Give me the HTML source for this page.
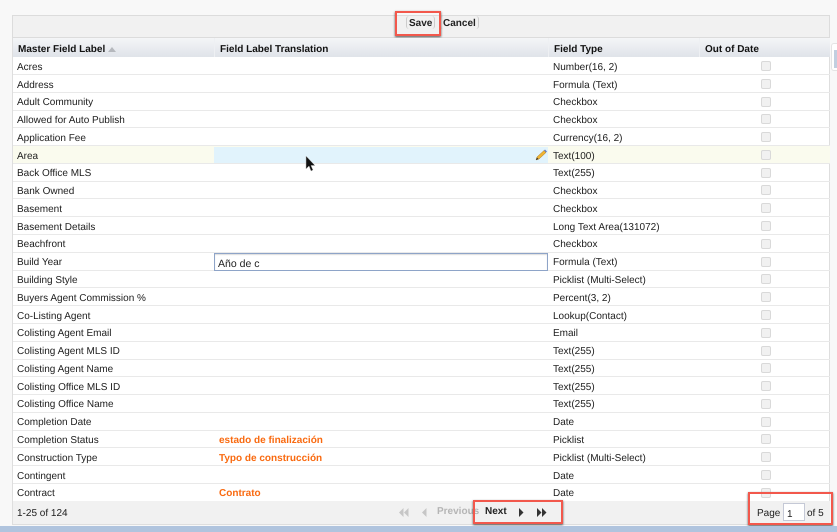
<!DOCTYPE html>
<html><head><meta charset="utf-8"><style>
html,body{margin:0;padding:0}
body{width:837px;height:532px;overflow:hidden;background:#f8f8f8;position:relative;font-family:"Liberation Sans",sans-serif;font-size:10px;color:#1c1c1c;text-rendering:geometricPrecision}
#wrap{position:absolute;left:0;top:0;width:837px;height:532px;filter:blur(.3px)}
#box{position:absolute;left:12px;top:15px;width:818px;height:510px;background:#fff;border:1px solid #dedede;box-sizing:border-box}
#top{position:absolute;left:12px;top:15px;width:818px;height:23px;background:#f1f1f1;border:1px solid #dcdcdc;box-sizing:border-box}
#head{position:absolute;left:13px;top:38px;width:817px;height:19px;background:linear-gradient(#f4f5f7,#dfe3e9)}
#head b{position:absolute;top:1px;line-height:21px;font-size:10px;color:#111;white-space:nowrap}
#head i{position:absolute;top:0;width:1px;height:19px;background:#eef0f3}
.r{position:absolute;left:13px;width:817px;height:18px;border-bottom:1px solid #e9e9e9;box-sizing:border-box;line-height:20px;white-space:nowrap}
.r span{position:absolute;left:4px;top:0}
.r em{position:absolute;left:206px;top:0;font-style:normal;font-weight:bold;color:#f96a10}
.r u{position:absolute;left:540px;top:0;text-decoration:none}
.d span,.d em,.d u{top:1px}
.r s{position:absolute;left:748px;top:4px;width:10px;height:10px;background:#f1f1f1;border:1px solid #d9d9d9;border-radius:2px;box-sizing:border-box}
#foot{position:absolute;left:13px;top:501px;width:817px;height:23px;background:#f1f1f1}
#band{position:absolute;left:0;top:526px;width:837px;height:6px;background:#b0c4de}
.red{position:absolute;border:2px solid #f2584c;box-sizing:border-box;box-shadow:0 1px 2px #555}
.btn{position:absolute;top:16px;height:13px;line-height:15px;font-weight:bold;border:1px solid #ccc;border-top:0;border-bottom:0;border-radius:3px;padding:0 2px;color:#222}
.t{position:absolute;white-space:nowrap}
</style></head><body><div id="wrap">
<div id="box"></div>
<div id="top"></div>
<div class="btn" style="left:406px">Save</div>
<div class="btn" style="left:440px">Cancel</div>
<div class="red" style="left:395px;top:11px;width:46px;height:25px"></div>
<div id="head">
<b style="left:5px">Master Field Label</b>
<svg style="position:absolute;left:95px;top:9px" width="8" height="5"><path d="M0 5L4 0L8 5Z" fill="#b5b8bd"/></svg>
<i style="left:201px"></i><b style="left:207px">Field Label Translation</b>
<i style="left:535px"></i><b style="left:541px">Field Type</b>
<i style="left:686px"></i><b style="left:692px">Out of Date</b>
</div>
<div class="r d" style="top:57px"><span>Acres</span><u>Number(16, 2)</u><s></s></div>
<div class="r d" style="top:75px"><span>Address</span><u>Formula (Text)</u><s></s></div>
<div class="r" style="top:93px"><span>Adult Community</span><u>Checkbox</u><s></s></div>
<div class="r d" style="top:110px"><span>Allowed for Auto Publish</span><u>Checkbox</u><s></s></div>
<div class="r d" style="top:128px"><span>Application Fee</span><u>Currency(16, 2)</u><s></s></div>
<div class="r d" style="top:146px;background:#fafbee"><div style="position:absolute;left:201px;top:1px;width:334px;height:16px;background:#e1f3fc"></div><span>Area</span><u>Text(100)</u><s></s></div>
<div class="r" style="top:164px"><span>Back Office MLS</span><u>Text(255)</u><s></s></div>
<div class="r d" style="top:181px"><span>Bank Owned</span><u>Checkbox</u><s></s></div>
<div class="r d" style="top:199px"><span>Basement</span><u>Checkbox</u><s></s></div>
<div class="r d" style="top:217px"><span>Basement Details</span><u>Long Text Area(131072)</u><s></s></div>
<div class="r" style="top:235px"><span>Beachfront</span><u>Checkbox</u><s></s></div>
<div class="r" style="top:253px"><span>Build Year</span><u>Formula (Text)</u><s></s></div>
<div class="r d" style="top:270px"><span>Building Style</span><u>Picklist (Multi-Select)</u><s></s></div>
<div class="r d" style="top:288px"><span>Buyers Agent Commission %</span><u>Percent(3, 2)</u><s></s></div>
<div class="r d" style="top:306px"><span>Co-Listing Agent</span><u>Lookup(Contact)</u><s></s></div>
<div class="r" style="top:324px"><span>Colisting Agent Email</span><u>Email</u><s></s></div>
<div class="r" style="top:342px"><span>Colisting Agent MLS ID</span><u>Text(255)</u><s></s></div>
<div class="r d" style="top:359px"><span>Colisting Agent Name</span><u>Text(255)</u><s></s></div>
<div class="r d" style="top:377px"><span>Colisting Office MLS ID</span><u>Text(255)</u><s></s></div>
<div class="r" style="top:395px"><span>Colisting Office Name</span><u>Text(255)</u><s></s></div>
<div class="r" style="top:413px"><span>Completion Date</span><u>Date</u><s></s></div>
<div class="r d" style="top:430px"><span>Completion Status</span><em>estado de finalización</em><u>Picklist</u><s></s></div>
<div class="r d" style="top:448px"><span>Construction Type</span><em>Typo de construcción</em><u>Picklist (Multi-Select)</u><s></s></div>
<div class="r d" style="top:466px"><span>Contingent</span><u>Date</u><s></s></div>
<div class="r" style="top:484px;height:17px;border-bottom:0"><span>Contract</span><em>Contrato</em><u>Date</u><s></s></div>
<svg style="position:absolute;left:535px;top:149px" width="13" height="12"><path d="M1 11L2 8L9 1.500L11 3.500L4 10Z" fill="#f0b432" stroke="#a8781e" stroke-width=".5"/><path d="M9 1.500L10 .5L12 2.500L11 3.500Z" fill="#6d7fc0"/><path d="M1 11L2 8.500L3.500 10Z" fill="#333"/></svg>
<svg style="position:absolute;left:305px;top:156px" width="11" height="17"><path d="M1 0V13L4 10L6 15L8 14L6 9.500H10Z" fill="#111" stroke="#bbb" stroke-width=".5"/></svg>
<div style="position:absolute;left:214px;top:253px;width:334px;height:18px;background:#fff;border:1px solid #8ea4c8;box-sizing:border-box;line-height:21px;padding-left:3px;font-size:10.500px;box-shadow:inset 0 1px 1px #ddd">Año de c</div>
<div id="foot"></div>
<div class="t" style="left:17px;top:505px;line-height:17px">1-25 of 124</div>
<svg style="position:absolute;left:398px;top:508px" width="12" height="9"><path d="M5.500 0V9L1 4.500ZM10.500 0V9L6 4.500Z" fill="#c6c6c6"/></svg>
<svg style="position:absolute;left:421px;top:508px" width="7" height="9"><path d="M5.500 0V9L1 4.500Z" fill="#c6c6c6"/></svg>
<div class="t" style="left:437px;top:504px;line-height:16px;font-weight:bold;color:#b5b5b5">Previous</div>
<div class="t" style="left:485px;top:504px;line-height:15px;font-weight:bold;color:#222">Next</div>
<svg style="position:absolute;left:518px;top:508px" width="7" height="9"><path d="M1 0V9L5.500 4.500Z" fill="#333"/></svg>
<svg style="position:absolute;left:536px;top:508px" width="12" height="9"><path d="M1 0V9L5.500 4.500ZM6 0V9L10.500 4.500Z" fill="#333"/></svg>
<div class="red" style="left:473px;top:500px;width:90px;height:24px"></div>
<div class="t" style="left:757px;top:506px;line-height:15px">Page</div>
<div style="position:absolute;left:783px;top:503px;width:22px;height:18px;background:#fff;border:1px solid #c5c9d6;box-sizing:border-box;line-height:21px;padding-left:3px">1</div>
<div class="t" style="left:807px;top:506px;line-height:15px">of 5</div>
<div class="red" style="left:748px;top:492px;width:85px;height:33px"></div>
<div id="band"></div>
<div style="position:absolute;left:831px;top:43px;width:6px;height:28px;background:#fff;border:1px solid #e4e4e4;border-right:0;border-radius:3px 0 0 3px;box-sizing:border-box"></div>
<div style="position:absolute;left:834px;top:50px;width:3px;height:18px;background:#c2cfe0"></div>
</div></body></html>
